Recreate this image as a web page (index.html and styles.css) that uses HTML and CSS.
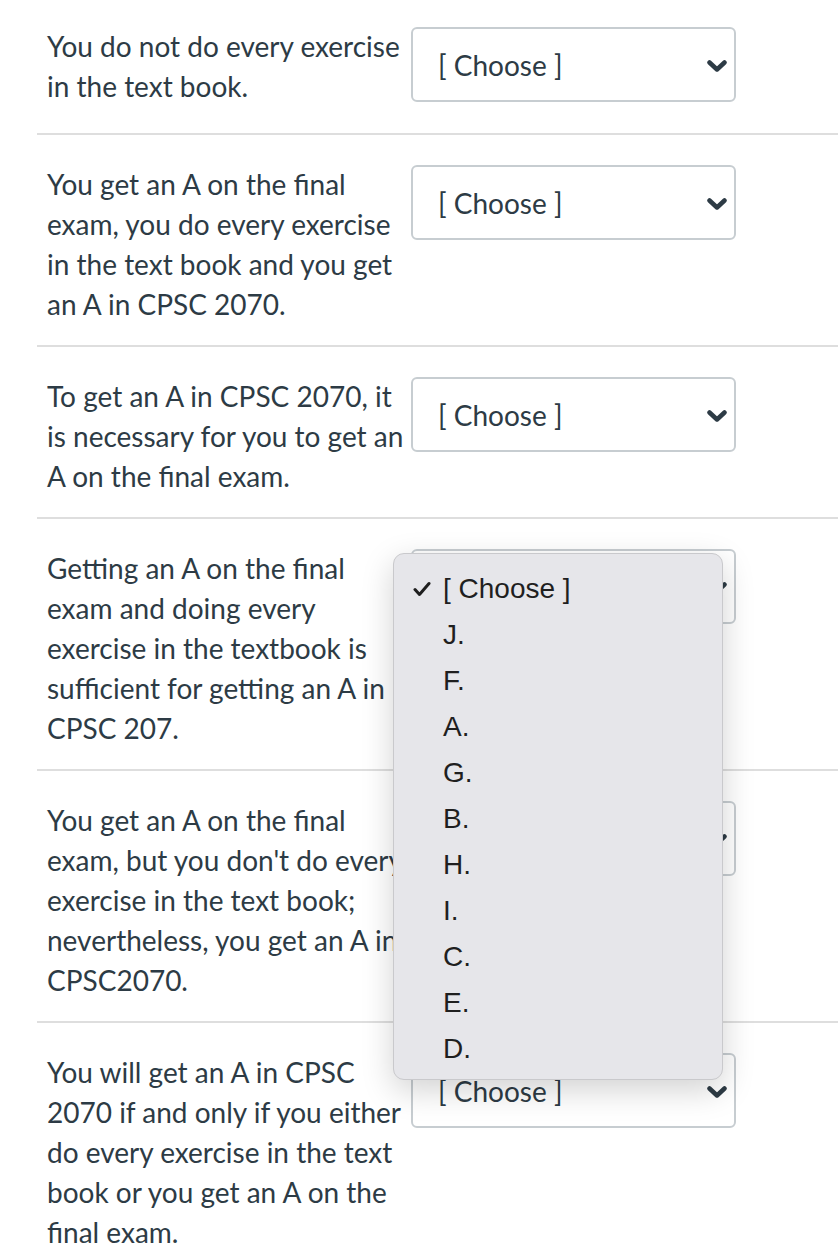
FILE: index.html
```html
<!DOCTYPE html>
<html lang="en">
<head>
    <meta charset="UTF-8">
    <meta name="viewport" content="width=device-width, initial-scale=1.0">
    <title>Matching</title>
    <link rel="stylesheet" href="styles.css">
</head>
<body>
    <div class="question">
        <div class="answer first">
            <div class="statement">You do not do every exercise in the text book.</div>
            <div class="select"><span>[ Choose ]</span>
                <svg class="chev" viewBox="0 0 20 12"><path d="M2.5 2.5 L10 9.5 L17.5 2.5" /></svg>
            </div>
        </div>

        <div class="answer">
            <div class="statement">You get an A on the final exam, you do every exercise in the text book and you get an A in CPSC 2070.</div>
            <div class="select"><span>[ Choose ]</span>
                <svg class="chev" viewBox="0 0 20 12"><path d="M2.5 2.5 L10 9.5 L17.5 2.5" /></svg>
            </div>
        </div>

        <div class="answer">
            <div class="statement">To get an A in CPSC 2070, it is necessary for you to get an A on the final exam.</div>
            <div class="select"><span>[ Choose ]</span>
                <svg class="chev" viewBox="0 0 20 12"><path d="M2.5 2.5 L10 9.5 L17.5 2.5" /></svg>
            </div>
        </div>

        <div class="answer">
            <div class="statement">Getting an A on the final exam and doing every exercise in the textbook is sufficient for getting an A in CPSC 207.</div>
            <div class="select"><span>[ Choose ]</span>
                <svg class="chev" viewBox="0 0 20 12"><path d="M2.5 2.5 L10 9.5 L17.5 2.5" /></svg>
            </div>
        </div>

        <div class="answer">
            <div class="statement">You get an A on the final exam, but you don't do every exercise in the text book; nevertheless, you get an A in CPSC2070.</div>
            <div class="select"><span>[ Choose ]</span>
                <svg class="chev" viewBox="0 0 20 12"><path d="M2.5 2.5 L10 9.5 L17.5 2.5" /></svg>
            </div>
        </div>

        <div class="answer last">
            <div class="statement">You will get an A in CPSC 2070 if and only if you either do every exercise in the text book or you get an A on the final exam.</div>
            <div class="select"><span>[ Choose ]</span>
                <svg class="chev" viewBox="0 0 20 12"><path d="M2.5 2.5 L10 9.5 L17.5 2.5" /></svg>
            </div>
        </div>
    </div>

    <!-- открытый список для 4-го вопроса -->
    <ul class="menu">
        <li class="checked">
            <svg class="tick" viewBox="0 0 18 16"><path d="M2 8.5 L6.5 13.5 L16 2.5" /></svg>[ Choose ]
        </li>
        <li>J.</li>
        <li>F.</li>
        <li>A.</li>
        <li>G.</li>
        <li>B.</li>
        <li>H.</li>
        <li>I.</li>
        <li>C.</li>
        <li>E.</li>
        <li>D.</li>
    </ul>
</body>
</html>
```

FILE: styles.css
```css
body {
    margin: 0;
    padding: 0;
    background: #fff;
    font-family: Lato, "Open Sans", sans-serif;
    color: #2d3b45;
}

.question {
    padding-left: 37px;
}

.answer {
    display: flex;
    align-items: flex-start;
    padding: 29px 0 21px;
    border-bottom: 2px solid #dedede;
}

.answer.first { padding-top: 26px; }
.answer.last { border-bottom: none; padding-bottom: 7px; }

.statement {
    width: 360px;
    margin-left: 10px;
    margin-right: 4px;
    font-size: 28px;
    line-height: 40px;
}

.select {
    box-sizing: border-box;
    width: 325px;
    height: 75px;
    margin: 1px 0 10px;
    padding: 0 7px 0 25px;
    border: 2px solid #c7cdd1;
    border-radius: 6px;
    background: #fff;
    display: flex;
    align-items: center;
    justify-content: space-between;
    font-size: 28px;
}

.chev {
    width: 20px;
    height: 12px;
    margin-top: 2px;
}
.chev path {
    fill: none;
    stroke: #2d3b45;
    stroke-width: 4.5;
    stroke-linecap: round;
    stroke-linejoin: round;
}

/* выпадающий список поверх страницы */
.menu {
    position: absolute;
    left: 393px;
    top: 553px;
    width: 330px;
    height: 527px;
    box-sizing: border-box;
    margin: 0;
    padding: 12px 0 0;
    list-style: none;
    background: #e6e6ea;
    border: 1px solid #c9c9cc;
    border-radius: 11px;
    box-shadow: 0 10px 32px rgba(0, 0, 0, 0.18);
    font-family: "Liberation Sans", Arial, sans-serif;
    font-size: 28px;
    color: #1f1f1f;
}

.menu li {
    height: 46px;
    line-height: 46px;
    padding-left: 49px;
    position: relative;
}

.tick {
    position: absolute;
    left: 19px;
    top: 15px;
    width: 18px;
    height: 16px;
}
.tick path {
    fill: none;
    stroke: #1f1f1f;
    stroke-width: 3;
    stroke-linecap: round;
    stroke-linejoin: round;
}
```
